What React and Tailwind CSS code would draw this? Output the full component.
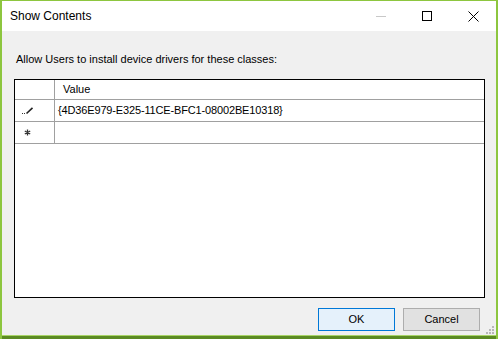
import React from 'react';

const font = { fontFamily: '"Liberation Sans", Arial, sans-serif' };

const TitleBar = () => (
  <div className="h-[30px] bg-white flex items-center shrink-0">
    <span className="pl-[8px] text-[12px] text-black" style={font}>Show Contents</span>
    <div className="ml-auto flex items-center h-full">
      <div className="w-[46px] h-full flex items-center justify-center">
        <div className="w-[10px] h-px bg-[#c8c8c8]" />
      </div>
      <div className="w-[46px] h-full flex items-center justify-center">
        <div className="w-[10px] h-[10px] border border-black" />
      </div>
      <div className="w-[46px] h-full flex items-center justify-center">
        <svg width="11" height="11" viewBox="0 0 11 11">
          <path d="M0.5 0.5 L10.5 10.5 M10.5 0.5 L0.5 10.5" stroke="#000" strokeWidth="1" />
        </svg>
      </div>
    </div>
  </div>
);

const EditGlyph = () => (
  <svg width="12" height="8" viewBox="0 0 12 8">
    <rect x="0" y="6" width="1" height="1" fill="#333" />
    <rect x="2" y="6" width="1" height="1" fill="#333" />
    <path d="M4.5 6.5 L10.5 0.8" stroke="#222" strokeWidth="1.6" />
  </svg>
);

const NewRowGlyph = () => (
  <svg width="7" height="7" viewBox="0 0 7 7">
    <path d="M3.5 0.5 V6.5 M0.8 2 L6.2 5 M6.2 2 L0.8 5" stroke="#333" strokeWidth="1.3" />
  </svg>
);

const SizeGrip = () => (
  <svg width="8" height="8" viewBox="0 0 8 8" className="absolute right-[2px] bottom-[1px]">
    {[[6, 0], [6, 3], [3, 3], [6, 6], [3, 6], [0, 6]].map(([x, y]) => (
      <rect key={`${x}-${y}`} x={x} y={y} width="2" height="2" fill="#b8b8b8" />
    ))}
  </svg>
);

export default function App() {
  return (
    <div className="w-[498px] h-[339px] bg-[#8dc63f] pl-[2px] pr-[2px] pt-px flex flex-col overflow-hidden">
      <div className="flex-1 flex flex-col bg-[#f0f0f0] relative" style={font}>
        <TitleBar />
        <div className="flex-1 flex flex-col pl-[12px] pr-[11px]">
          <div className="pt-[22px] pl-[2px] text-[11px] text-black leading-[13px]">
            Allow Users to install device drivers for these classes:
          </div>
          <div className="mt-[13px] h-[219px] border border-black bg-white text-[11px] text-black">
            <div className="flex h-[20px] border-b border-[#a0a0a0]">
              <div className="w-[40px] border-r border-[#a0a0a0]" />
              <div className="pl-[8px] flex items-center">Value</div>
            </div>
            <div className="flex h-[22px] border-b border-[#a0a0a0]">
              <div className="w-[40px] border-r border-[#a0a0a0] flex items-center pl-[7px]">
                <EditGlyph />
              </div>
              <div className="pl-[3px] flex items-center tracking-[-0.15px]">{'{4D36E979-E325-11CE-BFC1-08002BE10318}'}</div>
            </div>
            <div className="flex h-[22px] border-b border-[#a0a0a0]">
              <div className="w-[40px] border-r border-[#a0a0a0] flex items-center pl-[9px]">
                <NewRowGlyph />
              </div>
              <div />
            </div>
          </div>
          <div className="flex justify-end gap-[8px] mt-[10px] pr-[5px]">
            <button className="w-[77px] h-[23px] border border-[#0078d7] bg-[#e5f1fb] text-[11px] text-black">OK</button>
            <button className="w-[77px] h-[23px] border border-[#adadad] bg-[#e1e1e1] text-[11px] text-black">Cancel</button>
          </div>
        </div>
        <SizeGrip />
      </div>
      <div className="h-px bg-[#a8d466] shrink-0" />
      <div className="h-[3px] bg-[#5b8a23] shrink-0" />
    </div>
  );
}
